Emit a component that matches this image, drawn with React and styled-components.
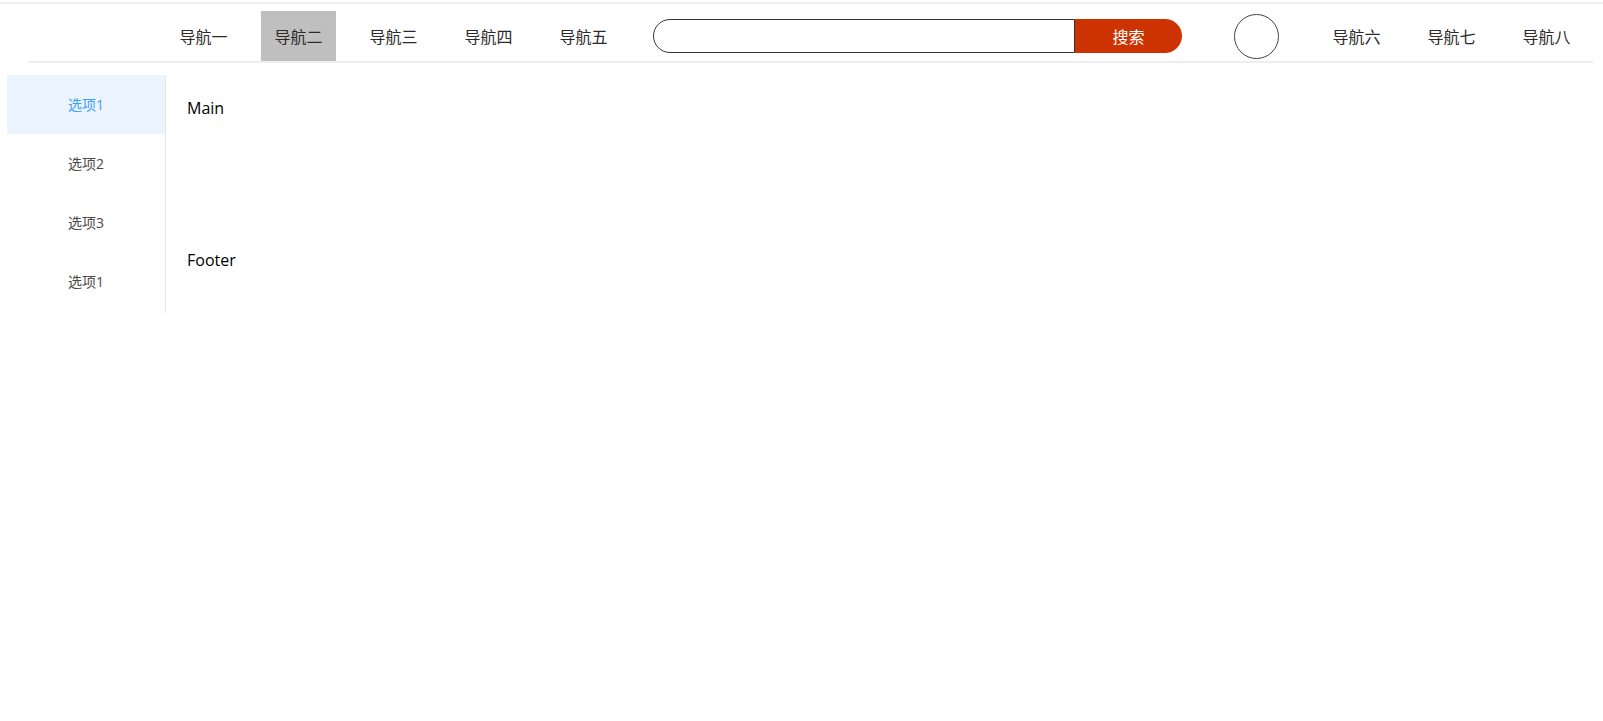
import React from 'react';
import styled, { createGlobalStyle } from 'styled-components';

const GlobalStyle = createGlobalStyle`
  html, body {
    margin: 0;
    padding: 0;
    background: #fff;
  }
  body {
    font-family: "Open Sans", "Noto Sans CJK SC", sans-serif;
    color: #000;
  }
  * {
    box-sizing: border-box;
  }
`;

const StPage = styled.div`
  padding-top: 2px;
`;

const StTopRule = styled.div`
  height: 2px;
  background: #f0f0f0;
`;

const StHeader = styled.header`
  display: flex;
  align-items: center;
  height: 59px;
  margin: 0 10px 0 28px;
  padding: 7px 0 0 138px;
  border-bottom: 2px solid #eeeeee;
`;

const StNavList = styled.nav`
  display: flex;
  gap: 20px;
  height: 50px;
`;

const StNavItem = styled.a`
  display: flex;
  align-items: center;
  justify-content: center;
  width: 75px;
  height: 50px;
  font-size: 16px;
  color: #2b2b2b;
  cursor: pointer;
  background: ${({ active }) => (active ? '#bfbfbf' : 'transparent')};
`;

const StSearch = styled.form`
  display: flex;
  height: 34px;
  margin: 0 52px 0 32px;
`;

const StSearchInput = styled.input`
  width: 422px;
  height: 34px;
  border: 1px solid #333;
  border-radius: 17px 0 0 17px;
  padding: 0 14px;
  font-size: 14px;
  outline: none;
`;

const StSearchButton = styled.button`
  width: 107px;
  height: 34px;
  border: none;
  border-radius: 0 17px 17px 0;
  background: #cd3300;
  color: #fff;
  font-size: 16px;
  font-family: inherit;
  cursor: pointer;
`;

const StAvatar = styled.div`
  width: 45px;
  height: 45px;
  border: 1px solid #444;
  border-radius: 50%;
  margin-right: 40px;
`;

const StBody = styled.div`
  display: flex;
  align-items: flex-start;
  margin-top: 12px;
  padding-left: 7px;
`;

const StSideMenu = styled.ul`
  list-style: none;
  margin: 0;
  padding: 0 0 2px;
  width: 159px;
  border-right: 1px solid #e6e6e6;
`;

const StMenuItem = styled.li`
  height: 59px;
  line-height: 59px;
  text-align: center;
  font-size: 14px;
  color: ${({ active }) => (active ? '#409eff' : '#4a4a4a')};
  background: ${({ active }) => (active ? '#ecf5ff' : 'transparent')};
  cursor: pointer;
`;

const StContent = styled.div`
  flex: 1;
  display: flex;
  flex-direction: column;
`;

const StMain = styled.main`
  height: 155px;
  padding: 22px 21px 20px;
  font-size: 16px;
  line-height: 22px;
`;

const StFooter = styled.footer`
  height: 60px;
  line-height: 60px;
  padding: 0 21px;
  font-size: 16px;
`;

const leftNav = ['导航一', '导航二', '导航三', '导航四', '导航五'];
const rightNav = ['导航六', '导航七', '导航八'];
const menu = ['选项1', '选项2', '选项3', '选项1'];

const App = () => {
  return (
    <StPage>
      <GlobalStyle />
      <StTopRule />
      <StHeader>
        <StNavList>
          {leftNav.map((n, i) => (
            <StNavItem key={n} active={i === 1}>
              {n}
            </StNavItem>
          ))}
        </StNavList>
        <StSearch onSubmit={e => e.preventDefault()}>
          <StSearchInput type="text" />
          <StSearchButton type="submit">搜索</StSearchButton>
        </StSearch>
        <StAvatar />
        <StNavList>
          {rightNav.map(n => (
            <StNavItem key={n}>{n}</StNavItem>
          ))}
        </StNavList>
      </StHeader>
      <StBody>
        <StSideMenu>
          {menu.map((m, i) => (
            <StMenuItem key={i} active={i === 0}>
              {m}
            </StMenuItem>
          ))}
        </StSideMenu>
        <StContent>
          <StMain>Main</StMain>
          <StFooter>Footer</StFooter>
        </StContent>
      </StBody>
    </StPage>
  );
};

export default App;
